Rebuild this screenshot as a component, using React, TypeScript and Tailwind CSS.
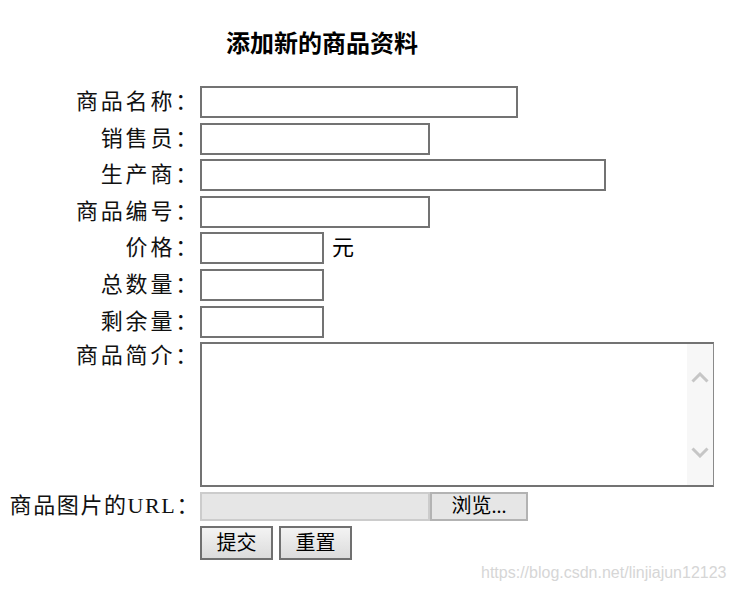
import React from 'react';

const inputCls = 'h-[32px] border-2 border-[#737373] bg-white outline-none px-1 text-[18px]';

const Chevron = ({ up }: { up?: boolean }) => (
  <svg width="18" height="11" viewBox="0 0 18 11" className="block">
    <path
      d={up ? 'M1.5 9.5 L9 2 L16.5 9.5' : 'M1.5 1.5 L9 9 L16.5 1.5'}
      fill="none"
      stroke="#c6c6c6"
      strokeWidth="3"
    />
  </svg>
);

const Label: React.FC<{ children: React.ReactNode; className?: string; tight?: boolean }> = ({ children, className = '', tight }) => (
  <div
    className={`whitespace-nowrap text-right pr-0 text-[22px] leading-[26px] text-[#111] ${tight ? 'tracking-[1.6px]' : 'tracking-[2.8px]'} ${className}`}
  >
    {children}
  </div>
);

export default function App() {
  return (
    <div className="relative min-h-screen bg-white font-['Liberation_Serif','Noto_Sans_CJK_SC',serif] text-black">
      <h1 className="pl-[226px] pt-[30px] text-[24px] leading-[28px] font-bold">添加新的商品资料</h1>

      <div className="mt-[28px] grid grid-cols-[200px_1fr] gap-y-[4.6px] items-center">
        <Label>商品名称：</Label>
        <div><input className={`${inputCls} w-[318px]`} /></div>

        <Label>销售员：</Label>
        <div><input className={`${inputCls} w-[230px]`} /></div>

        <Label>生产商：</Label>
        <div><input className={`${inputCls} w-[406px]`} /></div>

        <Label>商品编号：</Label>
        <div><input className={`${inputCls} w-[230px]`} /></div>

        <Label>价格：</Label>
        <div className="flex items-center gap-[8px]">
          <input className={`${inputCls} w-[124px]`} />
          <span className="text-[22px] leading-[26px]">元</span>
        </div>

        <Label>总数量：</Label>
        <div><input className={`${inputCls} w-[124px]`} /></div>

        <Label>剩余量：</Label>
        <div><input className={`${inputCls} w-[124px]`} /></div>

        <Label className="self-start pt-[1px]">商品简介：</Label>
        <div>
          <div className="flex w-[514px] h-[145px] border-y-2 border-l-2 border-r border-[#737373] border-r-[#8a8a8a]">
            <textarea className="flex-1 resize-none outline-none p-1 text-[18px] overflow-hidden" />
            <div className="w-[26px] bg-[#f7f7f7] flex flex-col items-center pt-[28px]">
              <Chevron up />
              <div className="h-[64px]" />
              <Chevron />
            </div>
          </div>
        </div>

        <Label tight>商品图片的URL：</Label>
        <div className="flex h-[29px]">
          <div className="w-[230px] h-full bg-[#e6e6e6] border-2 border-[#cccccc]" />
          <button className="w-[98px] h-full bg-[#e6e6e6] border-2 border-[#b3b3b3] text-[20px] leading-[24px]">浏览...</button>
        </div>

        <div />
        <div className="flex gap-[6px] pt-[1px]">
          <button className="w-[73px] h-[34px] border-2 border-[#707070] bg-gradient-to-b from-[#f3f3f3] to-[#dcdcdc] text-[20px] leading-[24px]">提交</button>
          <button className="w-[73px] h-[34px] border-2 border-[#707070] bg-gradient-to-b from-[#f3f3f3] to-[#dcdcdc] text-[20px] leading-[24px]">重置</button>
        </div>
      </div>

      <div className="absolute left-[481px] top-[561px] text-[16px] tracking-[0px] text-[#d6d6d6] font-['Liberation_Sans_Narrow','Liberation_Sans',sans-serif]">
        https://blog.csdn.net/linjiajun12123
      </div>
    </div>
  );
}
